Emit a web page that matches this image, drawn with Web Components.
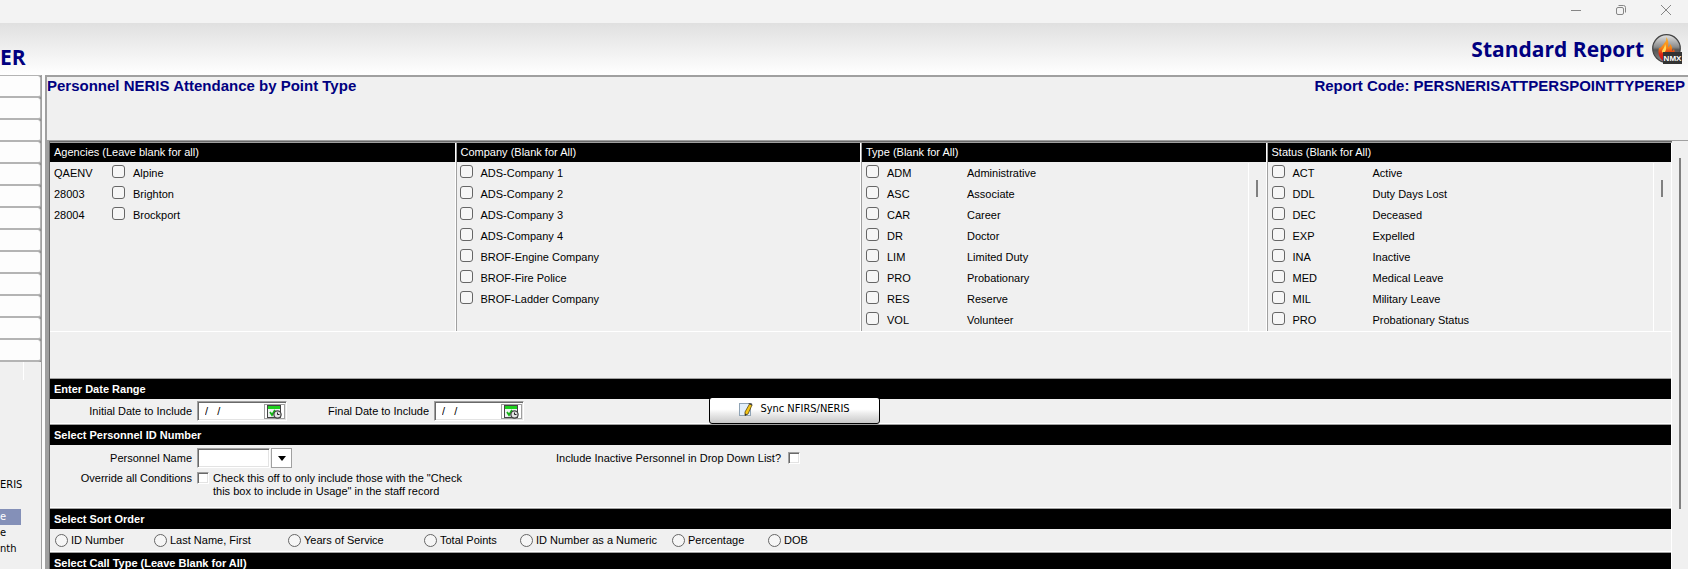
<!DOCTYPE html>
<html lang="en">
<head>
<meta charset="utf-8">
<title>Standard Report</title>
<style>
  html, body { margin: 0; height: 100%; }
  body { font: 11px/13px "Liberation Sans", Arial, sans-serif; color: #000; background: #f0f0f0; overflow: hidden; }
</style>
</head>
<body>
<app-window></app-window>

<script>
const define = (name, render) => customElements.define(name, class extends HTMLElement {
  constructor() { super(); this.attachShadow({ mode: 'open' }); }
  connectedCallback() {
    if (this.shadowRoot.childNodes.length) return;
    const t = document.createElement('template');
    t.innerHTML = render(this);
    this.shadowRoot.append(t.content.cloneNode(true));
  }
});

/* Top strip with the window controls */
define('title-bar', () => `
<style>
  :host { display: flex; justify-content: flex-end; height: 23px; background: #f3f3f3; flex: none; }
  button { width: 45px; height: 20px; padding: 0; border: 0; background: none; display: grid; place-items: center; }
  svg { stroke: #868686; fill: none; stroke-width: 1; }
</style>
<button aria-label="Minimize"><svg width="12" height="12"><path d="M1 6.5h10"/></svg></button>
<button aria-label="Restore"><svg width="12" height="12"><rect x="1.5" y="3.5" width="7" height="7" rx="1.5"/><path d="M3.5 1.5h5a2 2 0 0 1 2 2v5"/></svg></button>
<button aria-label="Close"><svg width="12" height="12"><path d="M1 1l10 10M11 1L1 11"/></svg></button>`);

/* Gradient banner with the product name, page name and logo */
define('app-header', () => `
<style>
  :host { display: flex; justify-content: space-between; align-items: center; height: 52px; flex: none; box-sizing: border-box;
    padding-right: 6px; background: linear-gradient(#e0e0e0, #fff);
    font: bold 21px/24px "Open Sans", Tahoma, sans-serif; color: #000080; }
  .name { padding-top: 16px; }
  .page { display: flex; align-items: center; gap: 8px; }
</style>
<span class="name">ER</span>
<div class="page"><span>Standard Report</span><nmx-logo></nmx-logo></div>`);

define('nmx-logo', () => `
<style>:host { display: block; width: 30px; height: 30px; } svg { display: block; }</style>
<svg width="30" height="30" viewBox="0 0 30 30">
  <defs>
    <linearGradient id="g" x1="0" y1="0" x2="0" y2="1"><stop offset="0" stop-color="#e4e4e4"/><stop offset=".45" stop-color="#8b8b8b"/><stop offset=".55" stop-color="#555"/><stop offset="1" stop-color="#8a8a8a"/></linearGradient>
    <linearGradient id="f" x1="0" y1="0" x2="0" y2="1"><stop offset="0" stop-color="#ffb52a"/><stop offset=".45" stop-color="#f58214"/><stop offset=".7" stop-color="#dd2a14"/><stop offset="1" stop-color="#c8101a"/></linearGradient>
  </defs>
  <circle cx="14.5" cy="14.5" r="13.8" fill="url(#g)" stroke="#444" stroke-width="1.2"/>
  <path d="M14 3c1 4-1 5-3 8-2 2-2 3-4 3-1 4-1 8 4 13h8c3-3 5-7 3-12-1 1-1 2-2 2 1-4-1-6-2-7 0 2-1 3-2 3 1-4 0-8-2-10z" fill="url(#f)"/>
  <path d="M13 10c0 4-3 5-3 8 1 1 2 1 3 0 1-2 2-4 0-8z" fill="#ffd95a"/>
  <rect x="11" y="18" width="19" height="12" fill="#333"/>
  <text x="20.5" y="27" text-anchor="middle" font-family="Liberation Sans, sans-serif" font-weight="bold" font-size="8" fill="#fff">NMX</text>
</svg>`);

define('side-nav', () => `
<style>
  :host { display: flex; flex-direction: column; width: 42px; flex: none; box-sizing: border-box; background: #f0f0f0;
    border-right: 1px solid #a0a0a0; font: 11px/16px "DejaVu Sans Condensed", Tahoma, sans-serif; }
  .rows { border-top: 1px solid #b4b4b4; background: #8c8c8c; }
  .rows button { display: block; width: 100%; height: 22px; padding: 0; border: 0; border-bottom: 2px solid #b4b4b4;
    border-right: 1px solid #b4b4b4; border-radius: 0 3px 3px 0; background: #fdfdfd; }
  .tick { width: 24px; height: 18px; border-right: 1px solid #fff; box-sizing: border-box; }
  nav { padding-top: 97px; }
  nav a { display: block; height: 16px; color: #000; text-decoration: none; }
  nav a.on { width: 21px; background: #8490b8; color: #fff; }
</style>
<div class="rows">${'<button aria-label="Menu group"></button>'.repeat(13)}</div>
<div class="tick"></div>
<nav><a href="#">ERIS</a><a href="#">&nbsp;</a><a href="#" class="on">e</a><a href="#">e</a><a href="#">nth</a></nav>`);

/* Thin scroll strip */
define('scroll-strip', () => `
<style>
  :host { display: block; width: 17px; flex: none; border-left: 1px solid #fff; margin-top: 1px; }
  i { display: block; width: 2px; height: 17px; margin: 17px 0 0 7px; background: #808080; }
</style><i></i>`);

/* Titled list of check boxes; rows are "code|name", or only "name" */
define('pick-list', el => {
  const rows = el.getAttribute('rows').split(';').map(r => r.split('|'));
  const lead = el.hasAttribute('code-first');
  return `
<style>
  :host { display: flex; flex-direction: column; flex: 1; min-width: 0; border-right: 1px solid #fff; }
  :host(:last-of-type) { border-right: 0; }
  :host(:not([first])) .body { box-shadow: inset 1px 0 #a0a0a0; }
  h2 { margin: 0; padding: 0 0 0 4px; height: 19px; font: 11px/19px "Liberation Sans", Arial, sans-serif; color: #fff; background: #000; }
  :host(:not([first])) h2 { border-left: 1px solid #a0a0a0; }
  .body { display: flex; height: 169px; border-bottom: 1px solid #fff; }
  ul { list-style: none; margin: 0; padding: 0 0 0 4px; flex: 1; }
  :host([scroll]) ul { padding-left: 5px; }
  li { display: flex; align-items: flex-start; height: 21px; }
  input { appearance: none; box-sizing: border-box; width: 13px; height: 13px; margin: 3px 0 0; border: 1px solid #666; border-radius: 3px; background: #f6f6f6; flex: none; }
  label, .code { line-height: 22px; }
  label { display: flex; padding-left: 8px; }
  label b { font-weight: normal; width: 80px; }
  .code { width: 58px; }
</style>
<h2>${el.getAttribute('heading')}</h2>
<div class="body">
  <ul>${rows.map((r, i) => lead
    ? `<li><span class="code">${r[0]}</span><input type="checkbox" id="c${i}"><label for="c${i}">${r[1]}</label></li>`
    : `<li><input type="checkbox" id="c${i}"><label for="c${i}">${r.length > 1 ? `<b>${r[0]}</b>${r[1]}` : r[0]}</label></li>`).join('')}</ul>
  ${el.hasAttribute('scroll') ? '<scroll-strip></scroll-strip>' : ''}
</div>`;
});

/* Black heading bar with content under it */
define('form-section', el => `
<style>
  :host { display: block; border-top: 1px solid #a0a0a0; border-bottom: 1px solid #fff; }
  h2 { margin: 0; padding-left: 4px; height: 20px; font: bold 11px/20px "Liberation Sans", Arial, sans-serif; color: #fff; background: #000; }
</style>
<h2>${el.getAttribute('heading')}</h2><slot></slot>`);

const sunken = `box-sizing: border-box; border: 1px solid; border-color: #a0a0a0 #fff #fff #a0a0a0; box-shadow: inset 1px 1px #696969, inset -1px -1px #e3e3e3; background: #fff; border-radius: 0;`;

define('date-field', el => `
<style>
  :host { display: grid; grid-template-columns: 142px 90px; column-gap: 5px; align-items: center; }
  label { text-align: right; }
  .box { ${sunken} display: flex; height: 20px; padding: 2px 1px 1px 2px; }
  input { flex: 1; min-width: 0; border: 0; padding: 0 0 0 5px; font: inherit; background: none; outline: 0; }
  button { width: 21px; padding: 0; border: 1px solid #a0a0a0; background: #fff; display: grid; place-items: center; }
  svg { display: block; }
</style>
<label for="d">${el.getAttribute('label')}</label>
<div class="box"><input id="d" value="/   /"><button aria-label="Choose date">
<svg width="15" height="14" viewBox="0 0 15 14"><rect x=".5" y=".5" width="13" height="12" fill="#eef2f2" stroke="#444"/><rect x="1" y="1" width="12" height="3" fill="#1fd01f"/><path d="M3 7l2 3 3-5" fill="none" stroke="#14b414" stroke-width="1.8"/><circle cx="10.5" cy="9.5" r="3.6" fill="#e4e4e4" stroke="#444" stroke-width="1.3"/><path d="M10.5 7.5v2h2" fill="none" stroke="#222"/></svg>
</button></div>`);

define('sync-button', () => `
<style>
  :host { display: block; }
  button { display: flex; align-items: center; justify-content: center; gap: 7px; width: 171px; height: 27px; padding: 0 0 2px; border: 1px solid #000; border-radius: 3px;
    background: linear-gradient(#fff 0 45%, #eee 60%, #c8c8c8);
    font: 11px/14px "DejaVu Sans Condensed", Tahoma, sans-serif; color: #000; }
</style>
<button><svg width="14" height="15" viewBox="0 0 14 15"><rect x=".5" y="1.5" width="11" height="12" fill="#e3effa" stroke="#8fa3b5"/><path d="M10.5 2l2.500 1-4 9-3 1.500V10z" fill="#f5c518" stroke="#5b4708" stroke-width=".8"/><path d="M9 1l4 .5.500 2-3-1.200z" fill="#444"/><path d="M6 11.500v2l2-1z" fill="#333"/></svg><span><slot></slot></span></button>`);

define('flat-check', el => `
<style>
  :host { display: flex; align-items: flex-start; gap: 4px; }
  :host([before]) { flex-direction: row-reverse; gap: 7px; }
  input { appearance: none; ${sunken} width: 12px; height: 12px; margin: 0; flex: none; }
</style>
<input type="checkbox" id="c" aria-label="${el.getAttribute('label') || ''}"><label for="c"><slot></slot></label>`);

define('name-select', () => `
<style>
  :host { display: grid; grid-template-columns: 73px 21px; column-gap: 1px; height: 20px; }
  .box { ${sunken} grid-area: 1 / 1; }
  .drop { grid-area: 1 / 2; box-sizing: border-box; border: 1px solid #a0a0a0; background: #fff; display: grid; place-items: center; }
  select { grid-area: 1 / 1 / 2 / 3; appearance: none; border: 0; padding: 0 4px; background: none; font: inherit; z-index: 1; }
</style>
<span class="box"></span><span class="drop"><svg width="8" height="5"><path d="M0 0h8L4 5z"/></svg></span>
<select aria-label="Personnel Name"><option></option></select>`);

define('sort-order', () => `
<style>
  :host { display: grid; grid-template-columns: 99px 134px 136px 96px 152px 96px 1fr; height: 22px; align-items: center; padding-left: 5px; }
  label { display: flex; align-items: center; gap: 3px; white-space: nowrap; }
  input { appearance: none; box-sizing: border-box; width: 13px; height: 13px; margin: 0; border: 1px solid #666; border-radius: 50%; background: #f6f6f6; }
</style>
${['ID Number', 'Last Name, First', 'Years of Service', 'Total Points', 'ID Number as a Numeric', 'Percentage', 'DOB']
  .map(t => `<label><input type="radio" name="sort">${t}</label>`).join('')}`);

define('report-panel', () => `
<style>
  :host { display: flex; flex-direction: column; flex: 1; min-width: 0; overflow: hidden; border-left: 2px solid #a0a0a0; border-top: 2px solid #a0a0a0; margin-left: 3px; box-sizing: border-box; }
  header { display: flex; justify-content: space-between; height: 63px; flex: none; padding-right: 3px;
    font: bold 15px/17px "Liberation Sans", Arial, sans-serif; color: #000080; }
  h1 { margin: 0; font: inherit; }
  .inner { flex: 1; min-height: 0; display: flex; border-left: 2px solid #a0a0a0; border-top: 1px solid #a0a0a0; overflow: hidden; }
  .sheet { flex: 1; min-width: 0; border-left: 1px solid #696969; border-top: 1px solid #696969; box-shadow: inset 0 1px #a0a0a0; padding-top: 1px; }
  .lists { display: flex; padding-bottom: 46px; }
  .main { border-right: 1px solid #fff; }
  .dates { display: flex; height: 24px; align-items: center; }
  sync-button { margin: -4px 0 -2px 185px; }
  .person { display: grid; grid-template-columns: 142px 354px auto 1fr; column-gap: 5px; row-gap: 4px; padding-top: 3px; height: 59px; grid-template-rows: 20px 32px; align-items: center; }
  .person > span { text-align: right; }
  .person .top { align-self: start; }
  .rail { width: 16px; flex: none; }
  .rail i { display: block; width: 2px; height: 351px; margin: 17px 0 0 7px; background: #808080; }
</style>
<header><h1>Personnel NERIS Attendance by Point Type</h1><span>Report Code: PERSNERISATTPERSPOINTTYPEREP</span></header>
<div class="inner">
  <div class="sheet"><div class="main">
    <div class="lists">
      <pick-list first code-first heading="Agencies (Leave blank for all)" rows="QAENV|Alpine;28003|Brighton;28004|Brockport"></pick-list>
      <pick-list heading="Company (Blank for All)" rows="ADS-Company 1;ADS-Company 2;ADS-Company 3;ADS-Company 4;BROF-Engine Company;BROF-Fire Police;BROF-Ladder Company"></pick-list>
      <pick-list scroll heading="Type (Blank for All)" rows="ADM|Administrative;ASC|Associate;CAR|Career;DR|Doctor;LIM|Limited Duty;PRO|Probationary;RES|Reserve;VOL|Volunteer"></pick-list>
      <pick-list scroll heading="Status (Blank for All)" rows="ACT|Active;DDL|Duty Days Lost;DEC|Deceased;EXP|Expelled;INA|Inactive;MED|Medical Leave;MIL|Military Leave;PRO|Probationary Status"></pick-list>
    </div>
    <form-section heading="Enter Date Range">
      <div class="dates">
        <date-field label="Initial Date to Include"></date-field>
        <date-field label="Final Date to Include"></date-field>
        <sync-button>Sync NFIRS/NERIS</sync-button>
      </div>
    </form-section>
    <form-section heading="Select Personnel ID Number">
      <div class="person">
        <span>Personnel Name</span><name-select></name-select>
        <flat-check before label="Include Inactive Personnel in Drop Down List?">Include Inactive Personnel in Drop Down List?</flat-check><i></i>
        <span class="top">Override all Conditions</span>
        <flat-check class="top" label="Override all Conditions">Check this off to only include those with the "Check<br>this box to include in Usage" in the staff record</flat-check>
      </div>
    </form-section>
    <form-section heading="Select Sort Order"><sort-order></sort-order></form-section>
    <form-section heading="Select Call Type (Leave Blank for All)"></form-section>
  </div></div>
  <div class="rail"><i></i></div>
</div>`);

define('app-window', () => `
<style>
  :host { display: flex; flex-direction: column; height: 100vh; overflow: hidden; }
  .work { display: flex; flex: 1; min-height: 0; background: #fcfcfc; }
  report-panel { background: #f0f0f0; }
</style>
<title-bar></title-bar>
<app-header></app-header>
<div class="work"><side-nav></side-nav><report-panel></report-panel></div>`);
</script>
</body>
</html>
